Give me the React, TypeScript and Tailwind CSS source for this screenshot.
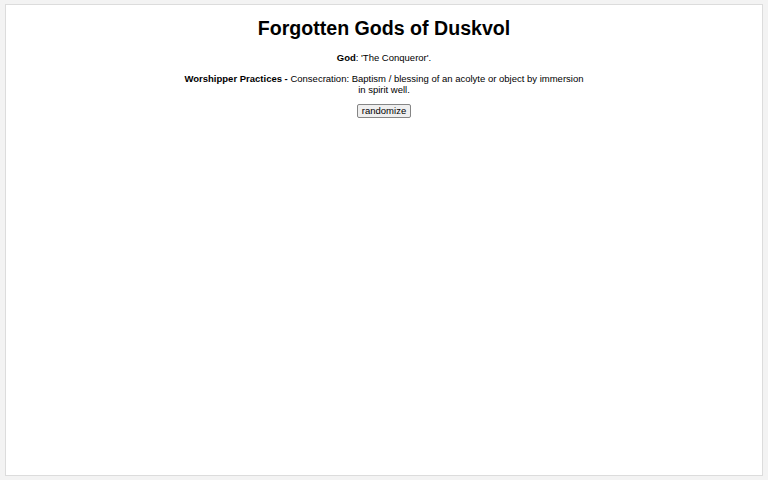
export default function App() {
  return (
    <div className="h-[480px] w-[768px] bg-[#f3f3f3] pl-[5px] pr-[5px] pt-[4px] pb-[4px] font-['Liberation_Sans',Arial,sans-serif] text-black">
      <div className="flex h-[472px] flex-col items-center border border-[#dcdcdc] bg-white pt-[12px]">
        <h1 className="text-[19.6px] font-bold leading-[23px]">Forgotten Gods of Duskvol</h1>

        <p className="mt-[12px] text-[9.5px] leading-[12px]">
          <b>God</b>: 'The Conqueror'.
        </p>

        <p className="mt-[9px] w-[406px] text-center text-[9.5px] leading-[11px]">
          <b>Worshipper Practices - </b>Consecration: Baptism / blessing of an acolyte or object by immersion in spirit well.
        </p>

        <button className="mt-[9px] rounded-[2px] border border-[#858585] bg-[#efefef] px-[4px] text-[9.5px] leading-[12px]">
          randomize
        </button>
      </div>
    </div>
  );
}
